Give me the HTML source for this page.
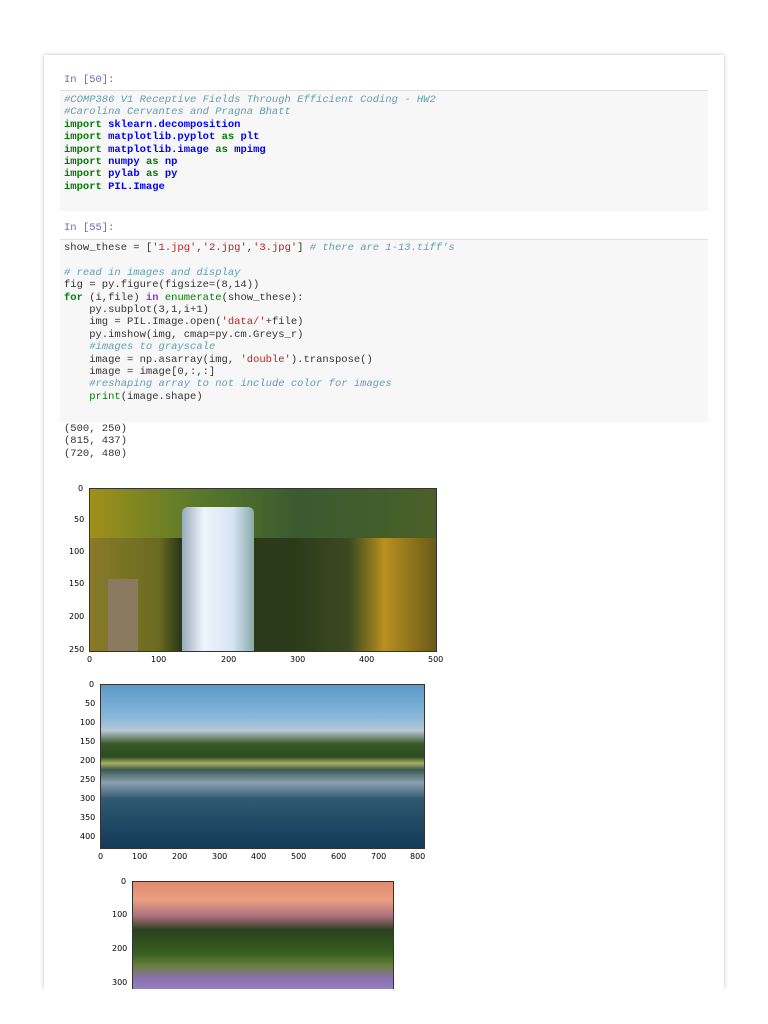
<!DOCTYPE html>
<html><head><meta charset="utf-8"><style>
html,body{margin:0;width:768px;height:1024px;overflow:hidden;background:#fff;font-family:"Liberation Mono",monospace;}
.card{position:absolute;left:44px;top:55px;width:680px;height:934px;background:#fff;box-shadow:0 0 4px rgba(0,0,0,.25);}
.p{position:absolute;font-size:10.5px;line-height:12.4px;white-space:pre;color:#333;}
.pr{color:#6070b0;}
.cell{position:absolute;left:60px;width:648px;background:#f7f7f7;border-top:1px solid #e0e0e0;}
.c{color:#60a0b0;font-style:italic}.k{color:#008000;font-weight:bold}.n{color:#0000ff;font-weight:bold}.s{color:#ba2121}.b{color:#008000}.m{color:#aa22ff;font-weight:bold}
.ax{position:absolute;overflow:hidden;border:1px solid #333;}
.t{position:absolute;font-family:"DejaVu Sans","Liberation Sans",sans-serif;font-size:8px;color:#000;}
</style></head><body>
<div class="card"></div>
<div class="p pr" style="left:64px;top:74px">In [50]:</div>
<div class="cell" style="top:90px;height:120px"></div>
<div class="p" style="left:64px;top:94px"><span class="c">#COMP386 V1 Receptive Fields Through Efficient Coding - HW2</span>
<span class="c">#Carolina Cervantes and Pragna Bhatt</span>
<span class="k">import</span> <span class="n">sklearn.decomposition</span>
<span class="k">import</span> <span class="n">matplotlib.pyplot</span> <span class="k">as</span> <span class="n">plt</span>
<span class="k">import</span> <span class="n">matplotlib.image</span> <span class="k">as</span> <span class="n">mpimg</span>
<span class="k">import</span> <span class="n">numpy</span> <span class="k">as</span> <span class="n">np</span>
<span class="k">import</span> <span class="n">pylab</span> <span class="k">as</span> <span class="n">py</span>
<span class="k">import</span> <span class="n">PIL.Image</span></div>
<div class="p pr" style="left:64px;top:222px">In [55]:</div>
<div class="cell" style="top:239px;height:182px"></div>
<div class="p" style="left:64px;top:242px">show_these = [<span class="s">'1.jpg'</span>,<span class="s">'2.jpg'</span>,<span class="s">'3.jpg'</span>] <span class="c"># there are 1-13.tiff's</span>

<span class="c"># read in images and display</span>
fig = py.figure(figsize=(8,14))
<span class="k">for</span> (i,file) <span class="m">in</span> <span class="b">enumerate</span>(show_these):
    py.subplot(3,1,i+1)
    img = PIL.Image.open(<span class="s">'data/'</span>+file)
    py.imshow(img, cmap=py.cm.Greys_r)
    <span class="c">#images to grayscale</span>
    image = np.asarray(img, <span class="s">'double'</span>).transpose()
    image = image[0,:,:]
    <span class="c">#reshaping array to not include color for images</span>
    <span class="b">print</span>(image.shape)</div>
<div class="p" style="left:64px;top:423px">(500, 250)
(815, 437)
(720, 480)</div>

<!-- plot 1 -->
<div class="ax" style="left:89px;top:488px;width:346px;height:162px;background:linear-gradient(90deg,#8a7a2a 0%,#6a6a20 20%,#2a3a18 26%,#2a3a1a 58%,#3b4a20 75%,#b89020 85%,#6a5a18 100%)">
<div style="position:absolute;left:0;top:0;width:100%;height:30%;background:linear-gradient(90deg,#a0901a,#5a7a2a 30%,#3a5a30 60%,#4a6028)"></div>
<div style="position:absolute;left:92px;top:18px;width:72px;height:144px;background:linear-gradient(90deg,#9ab,#eef4fc 30%,#d8e4f4 70%,#8aa);border-radius:6px 6px 0 0"></div>
<div style="position:absolute;left:18px;top:90px;width:30px;height:72px;background:#8a7a60"></div>
</div>
<div class="t" style="left:78px;top:484px">0</div><div class="t" style="left:74px;top:515px">50</div><div class="t" style="left:69px;top:547px">100</div><div class="t" style="left:69px;top:579px">150</div><div class="t" style="left:69px;top:612px">200</div><div class="t" style="left:69px;top:645px">250</div>
<div class="t" style="left:87px;top:655px">0</div><div class="t" style="left:151px;top:655px">100</div><div class="t" style="left:221px;top:655px">200</div><div class="t" style="left:290px;top:655px">300</div><div class="t" style="left:359px;top:655px">400</div><div class="t" style="left:428px;top:655px">500</div>

<!-- plot 2 -->
<div class="ax" style="left:100px;top:684px;width:323px;height:163px;background:linear-gradient(180deg,#5a9ac8 0%,#8ab8dc 20%,#b8c8d4 28%,#3a5a28 36%,#2a4a20 44%,#a8b060 48%,#3a5a50 52%,#8aa0b0 60%,#305870 70%,#123a5a 100%)"></div>
<div class="t" style="left:89px;top:680px">0</div><div class="t" style="left:85px;top:699px">50</div><div class="t" style="left:80px;top:718px">100</div><div class="t" style="left:80px;top:737px">150</div><div class="t" style="left:80px;top:756px">200</div><div class="t" style="left:80px;top:775px">250</div><div class="t" style="left:80px;top:794px">300</div><div class="t" style="left:80px;top:813px">350</div><div class="t" style="left:80px;top:832px">400</div>
<div class="t" style="left:98px;top:852px">0</div><div class="t" style="left:132px;top:852px">100</div><div class="t" style="left:172px;top:852px">200</div><div class="t" style="left:212px;top:852px">300</div><div class="t" style="left:251px;top:852px">400</div><div class="t" style="left:291px;top:852px">500</div><div class="t" style="left:331px;top:852px">600</div><div class="t" style="left:371px;top:852px">700</div><div class="t" style="left:410px;top:852px">800</div>

<!-- plot 3 -->
<div class="ax" style="left:132px;top:881px;width:260px;height:120px;background:linear-gradient(180deg,#e08a70 0%,#e8a080 15%,#b07080 28%,#2a4020 40%,#3a6020 60%,#6a8040 70%,#8a70b0 80%,#a090c8 100%)"></div>
<div class="t" style="left:121px;top:877px">0</div><div class="t" style="left:112px;top:910px">100</div><div class="t" style="left:112px;top:944px">200</div><div class="t" style="left:112px;top:978px">300</div>
<div style="position:absolute;left:0;top:989px;width:768px;height:35px;background:#fff"></div>
</body></html>
